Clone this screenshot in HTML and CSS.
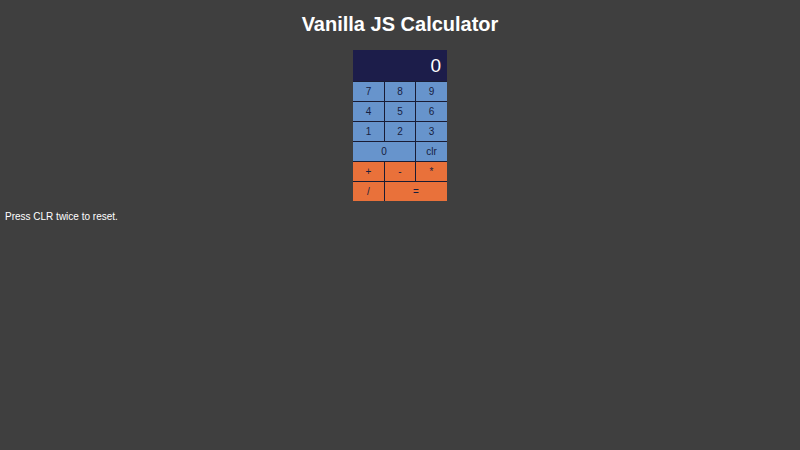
FILE: index.html
```html
<!DOCTYPE html>
<html lang="en">
<head>
<meta charset="utf-8">
<title>Vanilla JS Calculator</title>
<link rel="stylesheet" href="styles.css">
</head>
<body>
  <h1 class="title">Vanilla JS Calculator</h1>
  <div class="calc">
    <div class="display">0</div>
    <div class="keys">
      <button class="key num">7</button>
      <button class="key num">8</button>
      <button class="key num">9</button>
      <button class="key num">4</button>
      <button class="key num">5</button>
      <button class="key num">6</button>
      <button class="key num">1</button>
      <button class="key num">2</button>
      <button class="key num">3</button>
      <button class="key num wide">0</button>
      <button class="key num">clr</button>
      <button class="key op">+</button>
      <button class="key op">-</button>
      <button class="key op">*</button>
      <button class="key op">/</button>
      <button class="key op wide">=</button>
    </div>
  </div>
  <p class="hint">Press CLR twice to reset.</p>
</body>
</html>
```
FILE: styles.css
```css
html, body {
  margin: 0;
  background: #3f3f3f;
}

body {
  font-family: "Liberation Sans", Arial, sans-serif;
  color: #ffffff;
  padding: 0 5px;
}

.title {
  margin: 0;
  padding-top: 12px;
  height: 50px;
  box-sizing: border-box;
  text-align: center;
  font-size: 20px;
  font-weight: bold;
  line-height: 24px;
}

.calc {
  width: 94px;
  margin: 0 auto;
  background: #1c1f3d;
}

.display {
  height: 31px;
  background: #1c1d4a;
  color: #ffffff;
  font-size: 19px;
  line-height: 31px;
  text-align: right;
  padding-right: 6px;
}

.keys {
  display: grid;
  grid-template-columns: 31px 30px 31px;
  grid-auto-rows: 19px;
  gap: 1px;
  padding: 1px 1px 0 0;
  background: #1a1c34;
}

.key {
  border: none;
  margin: 0;
  padding: 0;
  font-family: "Liberation Sans", Arial, sans-serif;
  font-size: 10px;
  color: #16203f;
}

.num {
  background: #6794cc;
}

.op {
  background: #e9713a;
}

.wide {
  grid-column: span 2;
}

.hint {
  margin: 10px 0 0;
  font-size: 10px;
  line-height: 12px;
  color: #ffffff;
}
```
